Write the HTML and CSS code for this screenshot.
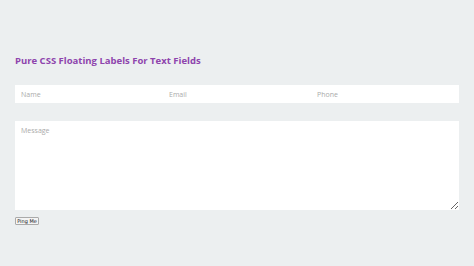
FILE: index.html
```html
<!DOCTYPE html>
<html lang="en">
<head>
    <meta charset="UTF-8">
    <title>Pure CSS Floating Labels</title>
    <link rel="stylesheet" href="styles.css">
</head>
<body>
    <div class="wrap">
        <h1>Pure CSS Floating Labels For Text Fields</h1>
        <form class="form">
            <div class="row">
                <label class="field">
                    <input type="text" placeholder=" ">
                    <span>Name</span>
                </label>
                <label class="field">
                    <input type="email" placeholder=" ">
                    <span>Email</span>
                </label>
                <label class="field">
                    <input type="tel" placeholder=" ">
                    <span>Phone</span>
                </label>
            </div>
            <label class="field area">
                <textarea placeholder=" "></textarea>
                <span>Message</span>
            </label>
            <button type="button">Ping Me</button>
        </form>
    </div>
</body>
</html>
```

FILE: styles.css
```css
body {
    margin: 0;
    background-color: #eceff0;
    font-family: 'Open Sans', sans-serif;
}

.wrap {
    padding: 54px 15px 0 15px;
}

h1 {
    margin: 0 0 17px 0;
    font-size: 9.5px;
    line-height: 14px;
    font-weight: bold;
    color: #8e44ad;
}

.row {
    display: flex;
    background: #fff;
    margin-bottom: 18px;
}

.field {
    position: relative;
    display: block;
    flex: 1;
}

.field input,
.field textarea {
    display: block;
    width: 100%;
    box-sizing: border-box;
    border: none;
    outline: none;
    background: #fff;
    font-family: inherit;
    font-size: 7px;
    padding: 6px;
}

.field input {
    height: 18px;
}

.field textarea {
    height: 89px;
    resize: vertical;
}

.field span {
    position: absolute;
    left: 6px;
    top: 5px;
    font-size: 7px;
    color: #aaa;
    pointer-events: none;
}

button {
    display: block;
    margin-top: 7px;
    width: 24px;
    height: 8px;
    padding: 0;
    font-family: 'DejaVu Sans', sans-serif;
    font-size: 5px;
    line-height: 6px;
    border: 1px solid #aaa;
    border-radius: 1px;
    background: #f4f4f4;
    color: #111;
}
```
